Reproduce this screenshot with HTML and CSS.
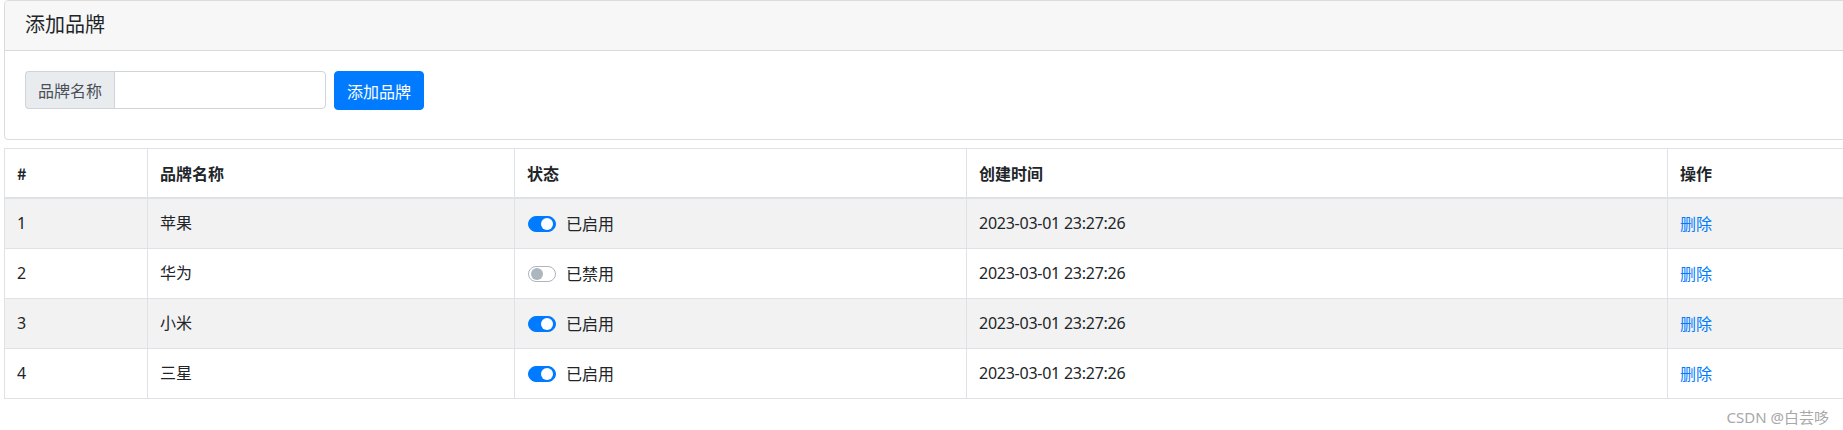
FILE: index.html
```html
<!DOCTYPE html>
<html lang="zh-CN">
<head>
<meta charset="utf-8">
<title>品牌管理</title>
<link rel="stylesheet" href="styles.css">
</head>
<body>
<div class="page">
  <div class="card">
    <div class="card-header">添加品牌</div>
    <div class="card-body">
      <form class="add-form">
        <div class="input-group">
          <span class="addon">品牌名称</span>
          <input class="field" type="text">
        </div>
        <button type="button" class="btn">添加品牌</button>
      </form>
    </div>
  </div>

  <table class="brands">
    <colgroup>
      <col class="c1"><col class="c2"><col class="c3"><col class="c4"><col class="c5">
    </colgroup>
    <thead>
      <tr><th>#</th><th>品牌名称</th><th>状态</th><th>创建时间</th><th>操作</th></tr>
    </thead>
    <tbody>
      <tr class="odd">
        <td>1</td><td>苹果</td>
        <td><span class="switch on"><span class="knob"></span></span><span class="state">已启用</span></td>
        <td class="date">2023-03-01 23:27:26</td><td><a href="#" class="del">删除</a></td>
      </tr>
      <tr>
        <td>2</td><td>华为</td>
        <td><span class="switch"><span class="knob"></span></span><span class="state">已禁用</span></td>
        <td class="date">2023-03-01 23:27:26</td><td><a href="#" class="del">删除</a></td>
      </tr>
      <tr class="odd">
        <td>3</td><td>小米</td>
        <td><span class="switch on"><span class="knob"></span></span><span class="state">已启用</span></td>
        <td class="date">2023-03-01 23:27:26</td><td><a href="#" class="del">删除</a></td>
      </tr>
      <tr>
        <td>4</td><td>三星</td>
        <td><span class="switch on"><span class="knob"></span></span><span class="state">已启用</span></td>
        <td class="date">2023-03-01 23:27:26</td><td><a href="#" class="del">删除</a></td>
      </tr>
    </tbody>
  </table>
</div>
<div class="watermark">CSDN @白芸哆</div>
</body>
</html>
```

FILE: styles.css
```css
html, body {
  margin: 0;
  padding: 0;
  overflow: hidden;
  background: #fff;
}
body {
  font-family: "Noto Sans", "Noto Sans CJK SC", sans-serif;
  font-size: 16px;
  line-height: 24px;
  color: #212529;
}
.page {
  overflow: hidden;
  padding-left: 4px;
}
.card {
  width: calc(100% + 40px);
  border: 1px solid #dcdcdc;
  border-radius: 4px;
  box-sizing: border-box;
  background: #fff;
}
.card-header {
  background: #f7f7f7;
  border-bottom: 1px solid #d9d9d9;
  padding: 12px 20px 13px;
  font-size: 20px;
  line-height: 24px;
  border-radius: 4px 4px 0 0;
}
.card-body {
  padding: 20px 20px 29px;
}
.add-form {
  display: flex;
  align-items: stretch;
  gap: 8px;
}
.input-group {
  display: flex;
  height: 38px;
  box-sizing: border-box;
}
.addon {
  display: flex;
  align-items: center;
  padding: 0 12px;
  background: #e9ecef;
  border: 1px solid #ced4da;
  border-right: 0;
  border-radius: 4px 0 0 4px;
  color: #495057;
  font-family: "Noto Sans CJK SC", sans-serif;
}
.field {
  width: 212px;
  box-sizing: border-box;
  border: 1px solid #ced4da;
  border-radius: 0 4px 4px 0;
  padding: 6px 12px;
  font: inherit;
  outline: none;
}
.btn {
  height: 39px;
  padding: 0 12px;
  background: #007bff;
  border: 1px solid #007bff;
  border-radius: 4px;
  color: #fff;
  font-family: "Noto Sans CJK SC", sans-serif;
  font-size: 16px;
  cursor: pointer;
}
.brands {
  margin-top: 8px;
  width: calc(100% + 40px);
  border-collapse: collapse;
  table-layout: fixed;
}
.c1 { width: 143px; }
.c2 { width: 367px; }
.c3 { width: 452px; }
.c4 { width: 701px; }
.brands th, .brands td {
  border: 1px solid #dee2e6;
  padding: 12px;
  text-align: left;
  vertical-align: top;
  font-size: 16px;
  line-height: 24px;
}
.brands th {
  font-weight: 700;
  border-bottom: 2px solid #dee2e6;
  font-family: "Noto Sans CJK SC", sans-serif;
}
.brands td {
  height: 24px;
}
.brands td.date {
  letter-spacing: -0.25px;
}
.brands tr.odd td {
  background: #f2f2f2;
}
.switch {
  display: inline-block;
  position: relative;
  vertical-align: middle;
  width: 28px;
  height: 16px;
  box-sizing: border-box;
  border: 1px solid #adb5bd;
  border-radius: 8px;
  background: #fff;
  margin: -3px 10px 0 1px;
}
.switch .knob {
  position: absolute;
  top: 1px;
  left: 2px;
  width: 12px;
  height: 12px;
  border-radius: 50%;
  background: #adb5bd;
}
.switch.on {
  background: #007bff;
  border-color: #007bff;
}
.switch.on .knob {
  left: 12px;
  background: #fff;
}
.state {
  font-family: "Noto Sans CJK SC", sans-serif;
}
.del {
  color: #007bff;
  text-decoration: none;
  font-family: "Noto Sans CJK SC", sans-serif;
}
.watermark {
  text-align: right;
  padding-right: 14px;
  margin-top: 8px;
  font-size: 15px;
  line-height: 20px;
  color: #a8a8a8;
}
```
